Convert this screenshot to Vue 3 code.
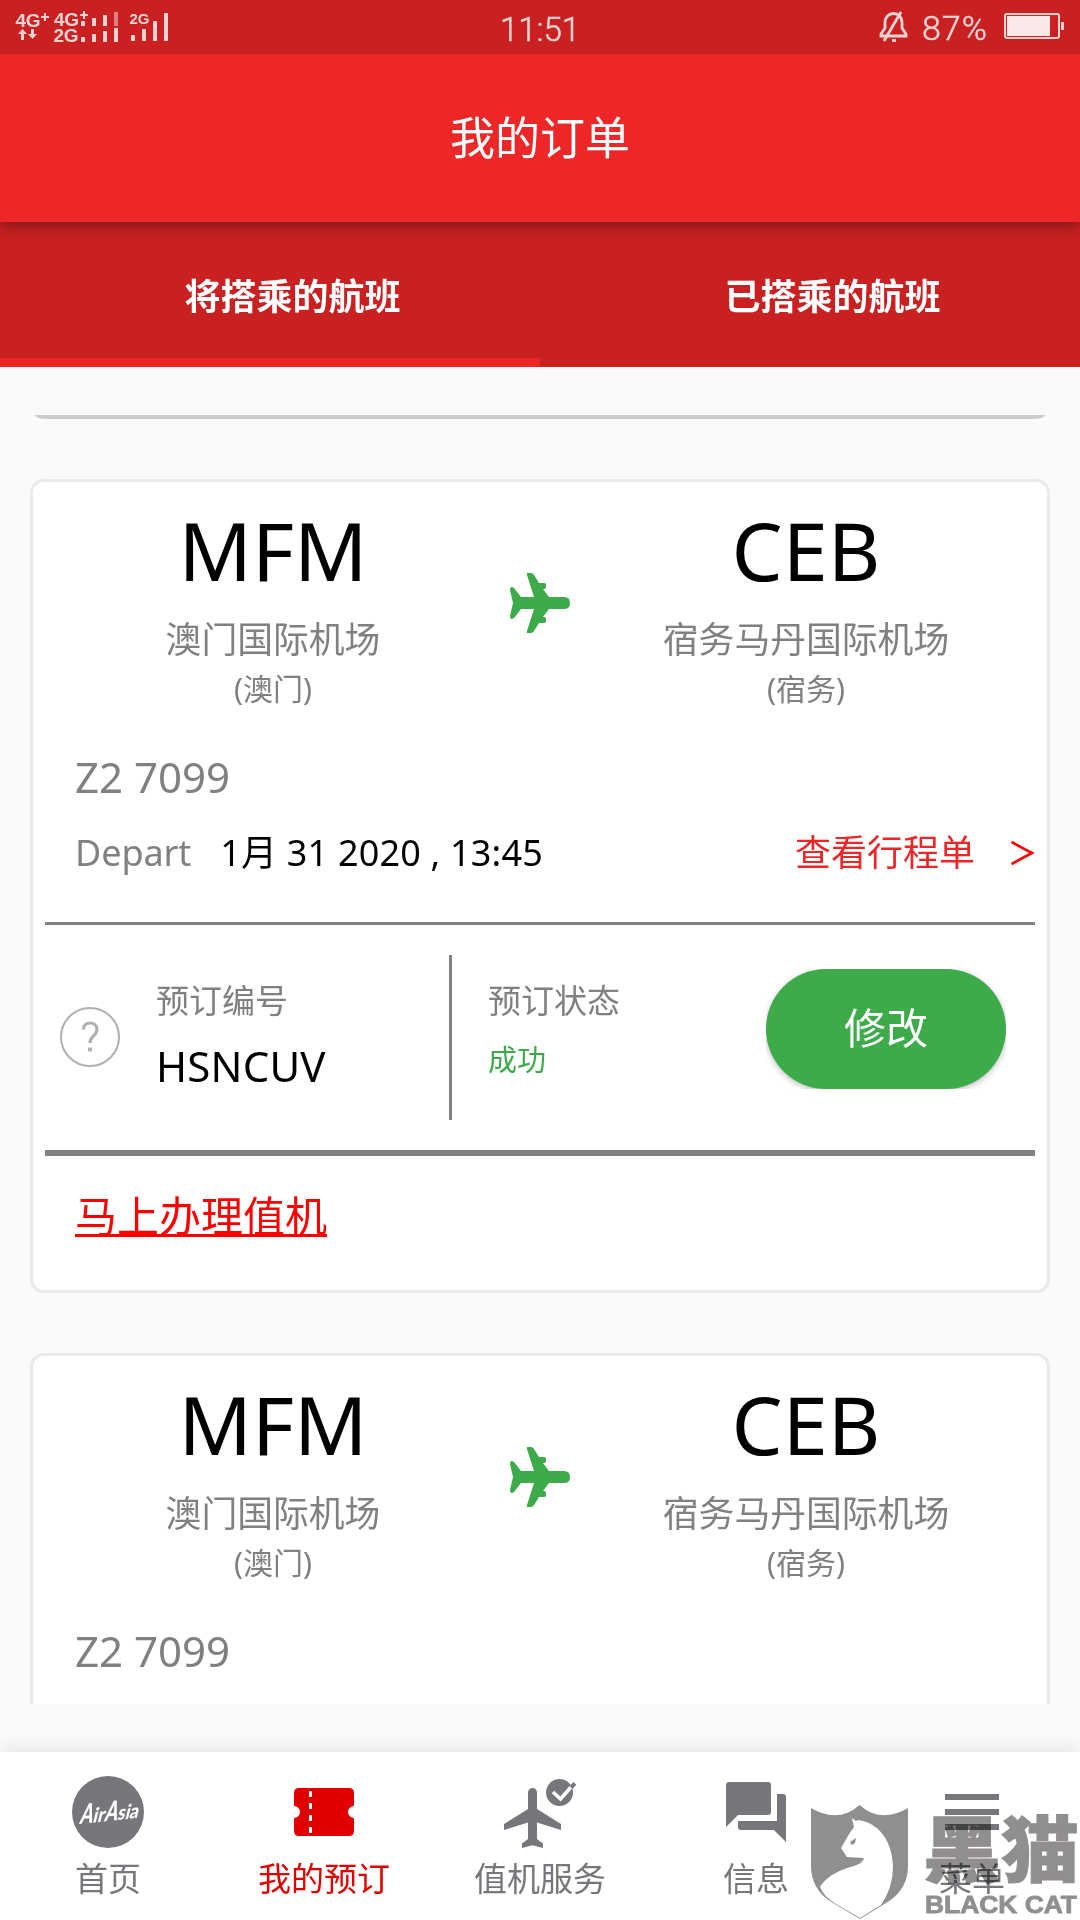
<template>
    <div class="app">
        <div class="status-bar">
            <svg class="signals" width="180" height="54" viewBox="0 0 180 54">
                <g class="signal-text">
                    <text x="15.500" y="27" font-size="19" textLength="25">4G</text>
                    <text x="54" y="26" font-size="19" textLength="25">4G</text>
                    <text x="53.500" y="42" font-size="19" textLength="25">2G</text>
                    <text x="129.500" y="24" font-size="15" textLength="20">2G</text>
                </g>
                <path d="M41 17h8M45 13v8M80 15h8M84 11v8" stroke="#f6d3d3" stroke-width="2" />
                <path d="M22.500 29l4.500 5h-3v6h-3v-6h-3zM32.500 39l-4.500-5h3v-5h3v5h3z" fill="#f6d3d3" />
                <rect
                    v-for="bar in signalBars"
                    :key="bar.x + '-' + bar.y"
                    :x="bar.x"
                    :y="bar.y"
                    width="4"
                    :height="bar.h"
                    rx="0.5"
                    :fill="bar.dim ? '#e08181' : '#f6d3d3'"
                />
            </svg>
            <span class="clock">11:51</span>
            <div class="status-right">
                <svg width="30" height="32" viewBox="0 0 30 32" fill="none" stroke="#f6d3d3" stroke-width="2.800">
                    <path d="M2 25v-2l4-6v-6a8.500 8.500 0 0 1 17 0v6l4 6v2z" />
                    <path d="M22 1L5 30" />
                    <path d="M13 29.500h4" />
                </svg>
                <span class="percent">87%</span>
                <svg class="battery" width="62" height="28" viewBox="0 0 62 28">
                    <rect x="1" y="1" width="54" height="24" rx="2" fill="none" stroke="#f6d3d3" stroke-width="2" />
                    <rect x="3" y="3" width="43" height="20" fill="#f9e8e8" />
                    <rect x="57" y="9" width="3" height="8" fill="#f6d3d3" />
                </svg>
            </div>
        </div>

        <header class="header">我的订单</header>

        <div class="tabs">
            <div
                v-for="(tab, i) in tabs"
                :key="tab"
                class="tab"
                :class="{ active: activeTab === i }"
                @click="activeTab = i"
            >
                {{ tab }}
            </div>
        </div>

        <main class="list">
            <div class="previous-edge"></div>
            <section v-for="order in orders" :key="order.id" class="card">
                <div class="route">
                    <div class="place">
                        <div class="code">{{ order.from.code }}</div>
                        <div class="airport">{{ order.from.airport }}</div>
                        <div class="city">({{ order.from.city }})</div>
                    </div>
                    <svg class="plane" width="60" height="60" viewBox="0 0 60 60" fill="#3dab4a">
                        <path
                            d="M11 24h13L17 2q-1-2 1-2h3q2 0 3 2l5 8h5q2 0 2 2v2q0 2-2 2h-1l6 8h15q6 0 6 6t-6 6H39l-6 8h1q2 0 2 2v2q0 2-2 2h-5l-5 8q-1 2-3 2h-3q-2 0-1-2l7-22H11L4 45q-1 1-3 1-1-1-1-3L3 30 0 17q0-2 1-3 2 0 3 1z"
                        />
                    </svg>
                    <div class="place">
                        <div class="code">{{ order.to.code }}</div>
                        <div class="airport">{{ order.to.airport }}</div>
                        <div class="city">({{ order.to.city }})</div>
                    </div>
                </div>

                <div class="flight-no">{{ order.flight }}</div>
                <div class="depart">
                    <span class="depart-label">Depart</span>
                    <span class="date">{{ order.date }}</span>
                    <a class="itinerary">
                        查看行程单
                        <svg width="24" height="26" viewBox="0 0 24 26" fill="none" stroke="#f00" stroke-width="2.600">
                            <path d="M.5 2L21 13 .5 24" />
                        </svg>
                    </a>
                </div>

                <div class="booking">
                    <svg class="help" width="60" height="60" viewBox="0 0 60 60" fill="none" stroke="#b0b0b0">
                        <circle cx="30" cy="30" r="29" stroke-width="2" />
                        <path
                            d="M23.500 22.500c0-4 2.500-6.500 6.500-6.500s7 2.500 7 6.500c0 6-7 6.500-7 13.500"
                            stroke-width="3.200"
                        />
                        <path d="M30 40.500v4" stroke-width="4" />
                    </svg>
                    <div class="field number">
                        <div class="label">预订编号</div>
                        <div class="pnr">{{ order.pnr }}</div>
                    </div>
                    <div class="field state">
                        <div class="label">预订状态</div>
                        <div class="success">成功</div>
                    </div>
                    <div class="button-box">
                        <button class="edit">修改</button>
                    </div>
                </div>

                <a class="checkin">马上办理值机</a>
            </section>
        </main>

        <nav class="nav">
            <div class="nav-item">
                <svg width="72" height="72" viewBox="0 0 72 72">
                    <circle cx="36" cy="36" r="36" fill="#76777b" />
                    <g class="brand" transform="translate(7 48) rotate(-6) skewX(-20)">
                        <text x="0" y="0" font-size="27" textLength="13" lengthAdjust="spacingAndGlyphs">A</text>
                        <text x="13" y="0" font-size="20" textLength="12" lengthAdjust="spacingAndGlyphs">ir</text>
                        <text x="25" y="0" font-size="27" textLength="13" lengthAdjust="spacingAndGlyphs">A</text>
                        <text x="38" y="0" font-size="20" textLength="21" lengthAdjust="spacingAndGlyphs">sia</text>
                    </g>
                </svg>
                <span>首页</span>
            </div>
            <div class="nav-item active">
                <svg width="72" height="72" viewBox="0 0 72 72">
                    <path
                        d="M11 12h50q5 0 5 5v13a6 6 0 0 0 0 12v13q0 5-5 5H11q-5 0-5-5V42a6 6 0 0 0 0-12V17q0-5 5-5z"
                        fill="#e10000"
                    />
                    <path d="M22.500 15v42" stroke="#fff" stroke-width="3" stroke-dasharray="6 6" />
                </svg>
                <span>我的预订</span>
            </div>
            <div class="nav-item">
                <svg width="72" height="72" viewBox="0 0 72 72" fill="#76777b">
                    <path
                        d="M28.500 12c2.500 0 4.500 2 4.500 4.500V33l24 15v6l-24-7.500V63l6 4.500V72l-10.500-2.700L18 72v-4.500l6-4.500V46.500L0 54v-6l24-15V16.500c0-2.500 2-4.500 4.500-4.500z"
                    />
                    <circle cx="55.500" cy="16.500" r="13.500" />
                    <path d="M49 16l7.500 7L68 10" fill="none" stroke="#fff" stroke-width="3.600" />
                    <path d="M67 11.500l4-4" stroke="#76777b" stroke-width="4" />
                </svg>
                <span>值机服务</span>
            </div>
            <div class="nav-item">
                <svg width="72" height="72" viewBox="0 0 72 72" fill="#76777b">
                    <path d="M9 6h39q3 0 3 3v27q0 3-3 3H18L6 51V9q0-3 3-3z" />
                    <path d="M57 18h6q3 0 3 3v45L54 54H21q-3 0-3-3v-6h39z" />
                </svg>
                <span>信息</span>
            </div>
            <div class="nav-item">
                <svg width="72" height="72" viewBox="0 0 72 72" fill="#76777b">
                    <path d="M9 18h54v6H9zM9 33h54v6H9zM9 48h54v6H9z" />
                </svg>
                <span>菜单</span>
            </div>
        </nav>

        <svg class="watermark" width="270" height="120" viewBox="0 0 270 120" fill="#918e8f">
            <path
                fill-rule="evenodd"
                d="M1 8Q28 24 49.500 5 71 24 98 8V66Q98 90 76 103L50 119 23 103Q1 90 1 66zM42 18L44 27Q40 32 38 36L31 48 37 57 54 58Q53 63 44 66 18 73 10 87 14 97 26 104L50 118 71 105Q83 88 83 66C82 42 70 23 48 20L46 21z"
            />
            <path d="M40 42l6-4-1 5-3 2z" />
            <text class="mark-cn" x="113" y="76" textLength="156" lengthAdjust="spacingAndGlyphs">黑猫</text>
            <text class="mark-en" x="115" y="112.500" textLength="152" lengthAdjust="spacingAndGlyphs">BLACK CAT</text>
        </svg>
    </div>
</template>

<script setup>
import { ref } from 'vue';

const tabs = ['将搭乘的航班', '已搭乘的航班'];
const activeTab = ref(0);

const flight = {
    from: { code: 'MFM', airport: '澳门国际机场', city: '澳门' },
    to: { code: 'CEB', airport: '宿务马丹国际机场', city: '宿务' },
    flight: 'Z2 7099',
    date: '1月 31 2020 , 13:45',
    pnr: 'HSNCUV',
};

const orders = [
    { id: 1, ...flight },
    { id: 2, ...flight },
];

const signalBars = [
    { x: 81, y: 21, h: 5 },
    { x: 92, y: 18, h: 8 },
    { x: 103, y: 15, h: 11 },
    { x: 114, y: 12, h: 14, dim: true },
    { x: 81, y: 37, h: 5 },
    { x: 92, y: 34, h: 8 },
    { x: 103, y: 31, h: 11 },
    { x: 114, y: 28, h: 14 },
    { x: 131, y: 35, h: 6 },
    { x: 142, y: 29, h: 12 },
    { x: 153, y: 21, h: 20 },
    { x: 164, y: 13, h: 28 },
];
</script>

<style>
body {
    background: #fafafa;
}
</style>

<style scoped>
.app {
    position: relative;
    width: 1080px;
    height: 1920px;
    overflow: hidden;
    background: #fafafa;
    color: #000;
    font-family: 'Noto Sans', 'Noto Sans CJK SC', sans-serif;
}

.app svg {
    display: block;
    flex: none;
}

/* Status bar */
.status-bar {
    position: relative;
    z-index: 2;
    display: grid;
    grid-template-columns: 1fr auto 1fr;
    align-items: center;
    height: 54px;
    background: #c92121;
    color: #f6d3d3;
    font-family: Roboto, sans-serif;
    font-weight: 300;
    -webkit-text-stroke: 0.5px #f6d3d3;
}

.signal-text {
    fill: #f6d3d3;
    font-family: 'Liberation Sans', sans-serif;
    font-weight: 700;
    -webkit-text-stroke: 0;
}

.clock {
    padding-top: 5px;
    font-size: 33px;
    line-height: 49px;
}

.status-right {
    display: flex;
    justify-content: flex-end;
    align-items: center;
    padding-right: 14px;
}

.percent {
    width: 66px;
    margin-left: 13px;
    padding-top: 2px;
    font-size: 34px;
    letter-spacing: 1px;
    line-height: 52px;
}

.battery {
    margin-left: 16px;
}

.header {
    position: relative;
    z-index: 1;
    height: 168px;
    background: #ed2628;
    box-shadow: 0 3px 14px rgba(0, 0, 0, 0.4);
    color: #fff;
    font-size: 45px;
    line-height: 167px;
    text-align: center;
}

.tabs {
    display: flex;
    height: 145px;
    background: #c92121;
}

.tab {
    box-sizing: border-box;
    width: 540px;
    height: 145px;
    padding-left: 45px;
    border-bottom: 9px solid transparent;
    color: #fff;
    font-size: 36px;
    font-weight: 700;
    line-height: 149px;
    text-align: center;
}

.tab.active {
    border-color: #ed2628;
}

/* Orders */
.list {
    height: 1289px;
    padding: 48px 30px 0;
    overflow: hidden;
}

.previous-edge {
    height: 4px;
    margin: 0 5px 60px;
    border-radius: 0 0 10px 10px / 0 0 4px 4px;
    background: #ccc;
}

.card {
    box-sizing: border-box;
    height: 814px;
    margin-bottom: 60px;
    border: 3px solid #eaeaea;
    border-radius: 14px;
    background: #fff;
}

.route {
    display: grid;
    grid-template-columns: 480px 54px 478px;
    padding-top: 18px;
    text-align: center;
}

.plane {
    margin-top: 73px;
    justify-self: center;
}

.code {
    font-size: 81px;
    line-height: 99px;
}

.airport {
    margin-top: 16px;
    color: #808080;
    font-size: 35.8px;
    line-height: 48px;
}

.city {
    margin-top: 8px;
    color: #808080;
    font-size: 30px;
    line-height: 36px;
}

.flight-no {
    margin: 40px 0 22px 42px;
    color: #808080;
    font-size: 42px;
    line-height: 60px;
}

.depart {
    display: flex;
    margin: 0 12px 45px 42px;
    font-size: 36px;
    line-height: 48px;
}

.depart-label {
    margin-right: 29px;
    color: #808080;
    letter-spacing: -0.1px;
}

.date {
    letter-spacing: 0.2px;
}

.itinerary {
    display: flex;
    align-items: center;
    gap: 36px;
    margin-left: auto;
    color: #ed2628;
}

.booking {
    display: flex;
    height: 225px;
    margin: 0 12px;
    border-top: 3px solid #808080;
    border-bottom: 6px solid #808080;
}

.help {
    margin: 82px 36px 0 15px;
}

.field {
    box-sizing: border-box;
    height: 165px;
    margin-top: 30px;
}

.number {
    width: 296px;
    padding-top: 22px;
    border-right: 3px solid #808080;
}

.state {
    padding: 22px 0 0 36px;
}

.label {
    color: #808080;
    font-size: 33px;
    line-height: 48px;
}

.pnr {
    margin-top: 11px;
    font-size: 42px;
    letter-spacing: 0.2px;
    line-height: 60px;
}

.success {
    margin-top: 15px;
    color: #3dab4a;
    font-size: 29px;
    line-height: 40px;
}

/* Keeps the button shadow inside its own box */
.button-box {
    width: 240px;
    height: 120px;
    margin: 44px 29px 0 auto;
    overflow: hidden;
}

.edit {
    display: block;
    width: 240px;
    height: 120px;
    padding: 0 0 2px;
    border: 0;
    border-radius: 60px;
    background: #3dab4a;
    box-shadow: 0 2px 6px rgba(0, 0, 0, 0.25);
    color: #fff;
    font-family: inherit;
    font-size: 42px;
    line-height: 116px;
}

.checkin {
    display: block;
    width: 252px;
    margin: 35px 0 0 42px;
    color: #f00;
    font-size: 42px;
    line-height: 50px;
    text-decoration: underline;
    text-decoration-skip-ink: none;
    text-decoration-thickness: 3px;
    text-underline-offset: 2px;
}

/* Bottom navigation */
.nav {
    display: flex;
    height: 168px;
    margin-top: 48px;
    background: #fff;
    box-shadow: 0 0 20px rgba(0, 0, 0, 0.12);
}

.nav-item {
    display: flex;
    flex-direction: column;
    align-items: center;
    width: 216px;
    padding-top: 24px;
    color: #76777b;
    font-size: 33px;
    line-height: 48px;
}

.nav-item span {
    margin-top: 7px;
}

.nav-item.active {
    color: #e10000;
}

.brand {
    fill: #fff;
    font-family: Lato, sans-serif;
    font-weight: 900;
}

.watermark {
    position: absolute;
    right: 0;
    bottom: 0;
    mix-blend-mode: multiply;
}

.mark-cn {
    font-family: 'Noto Sans CJK SC', sans-serif;
    font-size: 72px;
    font-weight: 900;
    stroke: #918e8f;
    stroke-width: 1px;
}

.mark-en {
    font-family: 'Liberation Sans', sans-serif;
    font-size: 23.5px;
    font-weight: 700;
    stroke: #918e8f;
    stroke-width: 0.8px;
}
</style>
